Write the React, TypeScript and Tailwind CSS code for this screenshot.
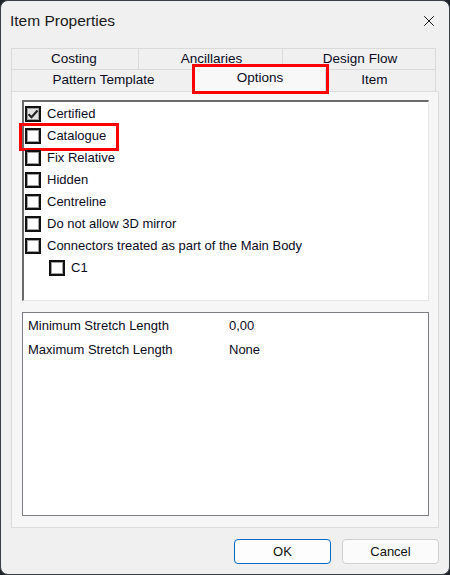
import { X } from 'lucide-react';

const font = { fontFamily: '"Liberation Sans", Arial, sans-serif' };

function Box({ checked }: { checked?: boolean }) {
  return (
    <span
      className={`flex h-[16px] w-[16px] shrink-0 items-center justify-center border-2 border-[#111] shadow-[inset_0_0_0_1px_#a0a0a0] ${
        checked ? 'bg-[#e2e2e2]' : 'bg-white'
      }`}
    >
      {checked && (
        <svg width="12" height="12" viewBox="0 0 12 12">
          <path d="M1.5 6.2 L4.5 9.2 L10.5 2.5" fill="none" stroke="#222" strokeWidth="2.2" />
        </svg>
      )}
    </span>
  );
}

const options = [
  { label: 'Certified', checked: true },
  { label: 'Catalogue', marked: true },
  { label: 'Fix Relative' },
  { label: 'Hidden' },
  { label: 'Centreline' },
  { label: 'Do not allow 3D mirror' },
  { label: 'Connectors treated as part of the Main Body' },
];

export default function App() {
  return (
    <div className="h-[575px] w-[450px] bg-[#1f232a]" style={font}>
      <div className="flex h-full w-full flex-col overflow-hidden rounded-[8px] border border-[#3a3f46] bg-[#f0f0f0]">
        {/* title bar */}
        <div className="flex h-[39px] shrink-0 items-center justify-between pl-[9px] pr-[11px]">
          <span className="text-[15.5px] text-[#1a1a1a]">Item Properties</span>
          <X size={18} strokeWidth={1.3} className="text-[#111]" />
        </div>

        {/* tabs */}
        <div className="ml-[10px] mt-[8px] flex w-[425px] flex-col text-[13.5px] text-[#0b0b1e]">
          <div className="flex h-[21px]">
            <div className="flex w-[127px] items-center justify-center border-l border-t border-[#dadada] pr-[2px] pt-[1px]">
              Costing
            </div>
            <div className="flex w-[144px] items-center justify-center border-l border-t border-[#dadada] pl-[2px] pt-[1px]">
              Ancillaries
            </div>
            <div className="flex w-[154px] items-center justify-center border-x border-t border-[#dadada] pl-[2px] pt-[1px]">
              Design Flow
            </div>
          </div>
          <div className="flex h-[22px] items-end">
            <div className="flex h-[22px] w-[184px] items-center justify-center border-l border-t border-[#dadada]">
              Pattern Template
            </div>
            <div className="relative z-10 -mb-[1px] flex h-[26px] w-[130px] items-center justify-center bg-[#f8f8f8] pb-[2px]">
              Options
              <div className="absolute -left-[3px] -top-[2px] h-[30px] w-[137px] border-[3.5px] border-[#ff0000]" />
            </div>
            <div className="flex h-[22px] w-[111px] items-center justify-center border-x border-t border-[#dadada] pr-[12px]">
              Item
            </div>
          </div>
        </div>

        {/* tab page */}
        <div className="ml-[10px] flex h-[437px] w-[428px] flex-col border border-[#dcdcdc] bg-[#f6f6f6] pl-[10px] pr-[9px] pt-[8px] text-[13px] text-[#0b0b1e]">
          <div className="flex h-[201px] flex-col border-b border-l-2 border-r border-t-2 border-b-[#e8e8e8] border-l-[#6a6a6a] border-r-[#e8e8e8] border-t-[#6a6a6a] bg-white pl-[1px] pt-[1px]">
            {options.map((o) => (
              <div key={o.label} className="relative flex h-[22px] items-center gap-[6px]">
                <Box checked={o.checked} />
                <span>{o.label}</span>
                {o.marked && (
                  <div className="absolute -left-[6px] top-[-2px] h-[28px] w-[100px] border-[3.5px] border-[#ff0000]" />
                )}
              </div>
            ))}
            <div className="flex h-[22px] items-center gap-[6px] pl-[24px]">
              <Box />
              <span>C1</span>
            </div>
          </div>

          <div className="mt-[11px] flex h-[204px] flex-col border border-[#7d7d84] bg-white pl-[5px] pt-[1px]">
            <div className="flex h-[24px] items-center">
              <span className="w-[201px]">Minimum Stretch Length</span>
              <span>0,00</span>
            </div>
            <div className="flex h-[24px] items-center">
              <span className="w-[201px]">Maximum Stretch Length</span>
              <span>None</span>
            </div>
          </div>
        </div>

        {/* buttons */}
        <div className="mt-[11px] flex justify-end gap-[11px] pr-[10px] text-[13px] text-[#111]">
          <button className="flex h-[25px] w-[97px] items-center justify-center rounded-[4px] border border-[#0067c0] bg-[#fdfdfd]">
            OK
          </button>
          <button className="flex h-[25px] w-[97px] items-center justify-center rounded-[4px] border border-[#d0d0d0] bg-[#fbfbfb]">
            Cancel
          </button>
        </div>
      </div>
    </div>
  );
}
